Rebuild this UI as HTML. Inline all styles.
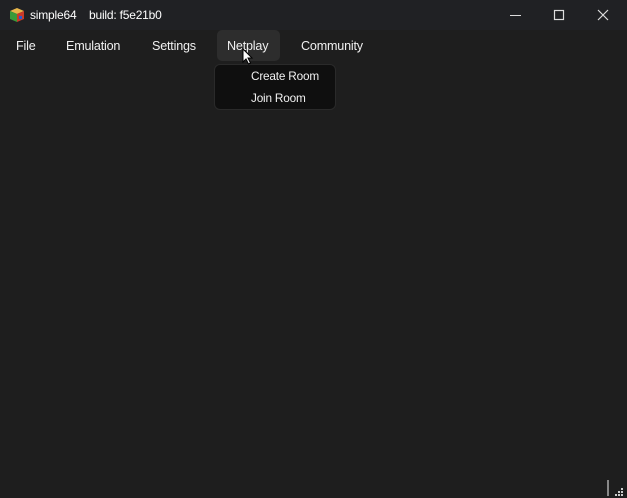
<!DOCTYPE html>
<html><head><meta charset="utf-8"><style>
html,body{margin:0;padding:0;width:627px;height:498px;overflow:hidden;background:#1e1e1e;font-family:"Liberation Sans",sans-serif;color:#fff}
.title{position:absolute;left:0;top:0;width:627px;height:30px;background:#202124}
.title span{position:absolute;top:8px;font-size:12px;color:#fff;letter-spacing:-0.2px}
.hl{position:absolute;left:217px;top:30px;width:63px;height:31px;background:#2d2d2d;border-radius:5px}
.m{position:absolute;top:39px;font-size:12.6px;color:#f0f0f0;letter-spacing:-0.2px}
.dd{position:absolute;left:214px;top:64px;width:120px;height:44px;background:#0f0f0f;border:1px solid #2a2a2a;border-radius:6px}
.dd span{position:absolute;left:36px;font-size:11.8px;color:#f0f0f0;letter-spacing:-0.2px}
</style></head><body>
<div class="title">
<svg style="position:absolute;left:9px;top:7px" width="16" height="16" viewBox="0 0 16 16"><polygon points="8,1 15,4 8,7 1,4" fill="#e8b64a"/><polygon points="1,4 8,7 8,15 1,12" fill="#3a9a3a"/><polygon points="8,7 15,4 15,12 8,15" fill="#c83a2a"/><rect x="10" y="9" width="3" height="3" fill="#2a5ad0"/></svg>
<span style="left:30px">simple64</span><span style="left:89px">build: f5e21b0</span>
<svg style="position:absolute;left:505px;top:8px" width="110" height="14" viewBox="0 0 110 14"><line x1="5" y1="7.5" x2="16" y2="7.5" stroke="#ddd" stroke-width="1"/><rect x="49.5" y="2.5" width="9" height="9" fill="none" stroke="#ddd" stroke-width="1.2"/><path d="M93 2 L103 12 M103 2 L93 12" stroke="#ddd" stroke-width="1.2"/></svg>
</div>
<div class="hl"></div>
<span class="m" style="left:16px">File</span>
<span class="m" style="left:66px">Emulation</span>
<span class="m" style="left:152px">Settings</span>
<span class="m" style="left:227px">Netplay</span>
<span class="m" style="left:301px">Community</span>
<div class="dd"><span style="top:4px">Create Room</span><span style="top:26px">Join Room</span></div>
<svg style="position:absolute;left:242px;top:48px" width="12" height="18" viewBox="0 0 12 18"><path d="M1 1 L1 14 L4 11 L6.5 16 L8.5 15 L6 10 L10 10 Z" fill="#fff" stroke="#000" stroke-width="1"/></svg>
<div style="position:absolute;left:607px;top:480px;width:2px;height:16px;background:#888"></div>
<svg style="position:absolute;left:615px;top:488px" width="10" height="9" viewBox="0 0 10 9"><g fill="#ccc"><rect x="6" y="0" width="2" height="2"/><rect x="3" y="3" width="2" height="2"/><rect x="6" y="3" width="2" height="2"/><rect x="0" y="6" width="2" height="2"/><rect x="3" y="6" width="2" height="2"/><rect x="6" y="6" width="2" height="2"/></g></svg>
</body></html>
